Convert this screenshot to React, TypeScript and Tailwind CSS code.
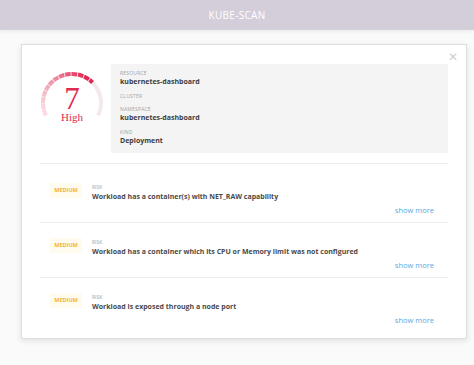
const risks = [
  { title: 'Workload has a container(s) with NET_RAW capability', pt: 'pt-[19px]', h: 'h-[59px]' },
  { title: 'Workload has a container which its CPU or Memory limit was not configured', pt: 'pt-[15px]', h: 'h-[55px]' },
  { title: 'Workload is exposed through a node port', pt: 'pt-[15px]', h: 'h-[55px]' },
];

function Gauge() {
  return (
    <div className="relative h-[64px] w-[64px]">
      <svg width="64" height="64" viewBox="0 0 64 64">
        <defs>
          <linearGradient id="g" gradientUnits="userSpaceOnUse" x1="6" y1="44" x2="52" y2="12">
            <stop offset="0" stopColor="#fcdbe2" />
            <stop offset="0.5" stopColor="#f08aa2" />
            <stop offset="1" stopColor="#e3234f" />
          </linearGradient>
        </defs>
        <path d="M5.7 44.3 A29 29 0 1 1 58.3 44.3" fill="none" stroke="#f4e8ec" strokeWidth="4" />
        <path d="M5.7 44.3 A29 29 0 0 1 52.5 11.5" fill="none" stroke="url(#g)" strokeWidth="4" strokeDasharray="5.5 0.9" />
      </svg>
      <div className="absolute inset-0 flex flex-col items-center pt-[15px] font-['Liberation_Serif',serif] text-[#e2294f]">
        <span className="text-[31px] leading-[26px]">7</span>
        <span className="text-[11px] leading-[11px]">High</span>
      </div>
    </div>
  );
}

function Field({ label, value }: { label: string; value?: string }) {
  return (
    <div className="mb-[5px]">
      <p className="text-[5px] uppercase leading-[8px] tracking-[0.2px] text-[#a3a3a3]">{label}</p>
      {value && <p className="text-[7px] font-bold leading-[10px] text-[#3d3d3d]">{value}</p>}
    </div>
  );
}

function RiskRow({ title, pt, h }: { title: string; pt: string; h: string }) {
  return (
    <div className={`${h} ${pt} border-t border-[#ececec] pl-[10px] pr-[14px]`}>
      <div className="flex items-start gap-[10px]">
        <span className="flex h-[15px] w-[32px] items-center justify-center bg-[#fffbee] text-[5.5px] font-bold text-[#f2b431]">MEDIUM</span>
        <div>
          <p className="text-[5px] uppercase leading-[8px] text-[#a3a3a3]">Risk</p>
          <p className="text-[7px] font-bold leading-[11px] text-[#4a4a4a]">{title}</p>
        </div>
      </div>
      <div className="mt-[2px] flex justify-end">
        <span className="text-[7.5px] leading-[12px] text-[#5aa9df]">show more</span>
      </div>
    </div>
  );
}

export default function App() {
  return (
    <div className="h-[365px] w-[474px] overflow-hidden bg-[#fafafa] font-['Open_Sans',sans-serif]">
      <div className="flex h-[30px] items-center justify-center bg-[#d4cdda] shadow-[0_2px_4px_rgba(0,0,0,0.06)]">
        <span className="text-[10px] tracking-[0.3px] text-white">KUBE-SCAN</span>
      </div>
      <div className="pl-[21px] pt-[14px]">
        <div className="relative h-[295px] w-[446px] border border-[#dedede] bg-white px-[18px] pt-[19px] shadow-[0_2px_6px_rgba(0,0,0,0.1)]">
          <span className="absolute right-[8px] top-[6px] text-[12px] leading-[12px] text-[#cfcfcf]">✕</span>
          <div className="flex">
            <div className="w-[71px] pt-[7px]">
              <Gauge />
            </div>
            <div className="h-[89px] flex-1 bg-[#f4f4f4] pl-[9px] pt-[5px]">
              <Field label="Resource" value="kubernetes-dashboard" />
              <Field label="Cluster" />
              <Field label="Namespace" value="kubernetes-dashboard" />
              <Field label="Kind" value="Deployment" />
            </div>
          </div>
          <div className="mt-[10px]">
            {risks.map((r) => (
              <RiskRow key={r.title} {...r} />
            ))}
          </div>
        </div>
      </div>
    </div>
  );
}
